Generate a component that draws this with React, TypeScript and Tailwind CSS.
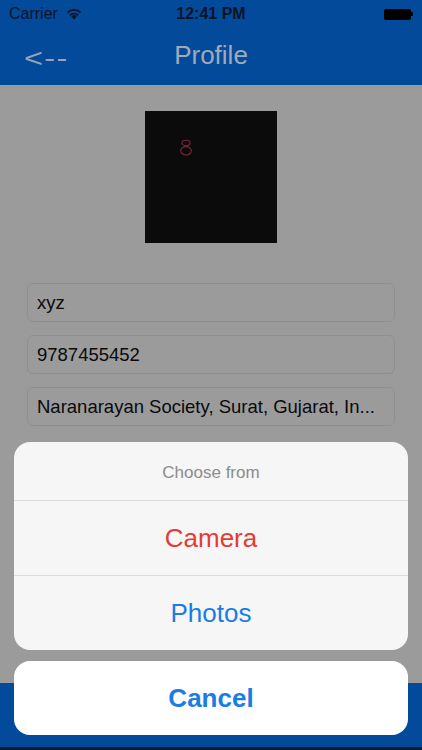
const fields = ["xyz", "9787455452", "Naranarayan Society, Surat, Gujarat, In..."];

function Wifi() {
    return (
        <svg width="16" height="12" viewBox="0 0 16 12" className="text-[#0b1426]">
            <path d="M8 11.5 L5.3 8.6 A3.8 3.8 0 0 1 10.7 8.6 Z" fill="currentColor" />
            <path d="M3.4 6.6 A6.5 6.5 0 0 1 12.6 6.6 L11.4 7.9 A4.7 4.7 0 0 0 4.6 7.9 Z" fill="currentColor" />
            <path d="M0.8 3.9 A10.2 10.2 0 0 1 15.2 3.9 L13.9 5.3 A8.3 8.3 0 0 0 2.1 5.3 Z" fill="currentColor" />
        </svg>
    );
}

function Battery() {
    return (
        <div className="flex items-center">
            <div className="w-[27px] h-[11px] rounded-[2px] bg-black" />
            <div className="w-[2px] h-[4px] rounded-r-[1px] bg-black" />
        </div>
    );
}

export default function App() {
    return (
        <div className="relative w-[422px] h-[750px] overflow-hidden bg-[#9b9b9b] font-['Liberation_Sans',sans-serif]">
            <div className="flex flex-col h-full">
                <header className="bg-[#034a9b]">
                    <div className="relative h-[26px] flex items-center justify-between pl-[9px] pr-[9px] pt-[2px] text-[#0b1426]">
                        <div className="flex items-center gap-[8px] text-[16px]">
                            <span>Carrier</span>
                            <Wifi />
                        </div>
                        <span className="absolute left-1/2 -translate-x-1/2 text-[16px] font-bold">12:41 PM</span>
                        <Battery />
                    </div>
                    <div className="relative h-[59px] flex items-center justify-center">
                        <span className="absolute left-[24px] top-[13px] inline-block origin-left scale-x-[1.25] text-[26px] tracking-[0.04em] text-[#9aa4b6]">&lt;--</span>
                        <h1 className="text-[26px] text-[#a2a9b7]">Profile</h1>
                    </div>
                </header>

                <main className="flex-1 flex flex-col items-center">
                    <div className="mt-[26px] w-[132px] h-[132px] bg-[#0b0b0b] relative">
                        <svg width="14" height="20" viewBox="0 0 14 20" className="absolute left-[34px] top-[27px]">
                            <ellipse cx="7" cy="5" rx="4" ry="2.7" fill="none" stroke="#7a2636" strokeWidth="1.1" />
                            <ellipse cx="7" cy="12.8" rx="5.4" ry="4.2" fill="none" stroke="#7a2636" strokeWidth="1.1" />
                        </svg>
                    </div>
                    <div className="mt-[40px] w-full px-[27px] flex flex-col gap-[13px]">
                        {fields.map((f) => (
                            <div
                                key={f}
                                className="h-[39px] flex items-center pl-[9px] pr-[9px] rounded-[6px] border border-[#8f8f8f] bg-[#9b9b9b] text-[18.5px] text-[#0a0a0a] whitespace-nowrap overflow-hidden"
                            >
                                {f}
                            </div>
                        ))}
                    </div>
                </main>

                <footer className="h-[67px] bg-[#034a9b] border-b-[3px] border-[#0b1a36]" />
            </div>

            <div className="absolute inset-0 flex flex-col justify-end px-[14px] pb-[15px]">
                <div className="rounded-[16px] bg-[#f6f6f6] overflow-hidden">
                    <div className="h-[59px] flex items-center justify-center pt-[3px] border-b border-[#dadbdf] text-[17px] text-[#8c8c8c]">
                        Choose from
                    </div>
                    <div className="h-[75px] flex items-center justify-center border-b border-[#dadbdf] text-[26px] text-[#e53b32]">
                        Camera
                    </div>
                    <div className="h-[74px] flex items-center justify-center text-[26px] text-[#1a7ce4]">
                        Photos
                    </div>
                </div>
                <div className="mt-[11px] h-[74px] rounded-[16px] bg-white flex items-center justify-center text-[26px] font-bold text-[#1a7ce4]">
                    Cancel
                </div>
            </div>
        </div>
    );
}
